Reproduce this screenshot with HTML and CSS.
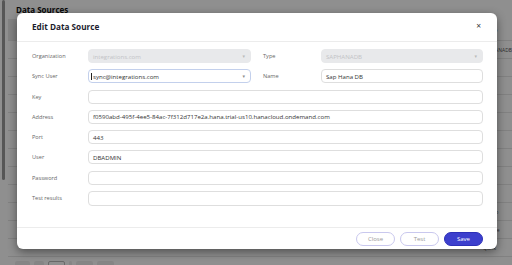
FILE: index.html
```html
<!DOCTYPE html>
<html>
<head>
<meta charset="utf-8">
<link rel="stylesheet" href="styles.css">
</head>
<body>
<div class="page">
  <div class="scrollbar"></div>
  <h1 class="page-title">Data Sources</h1>
  <div class="table">
    <div class="tr th"><span class="c1"></span><span class="c2">Type</span></div>
    <div class="tr"><span class="c1"></span><span class="c2">SAPHANADB</span></div>
    <div class="tr"><span class="c1"></span><span class="c2">ODBC</span></div>
    <div class="tr"><span class="c1"></span><span class="c2">ODBC</span></div>
    <div class="tr"><span class="c1"></span><span class="c2">ODBC</span></div>
    <div class="tr"><span class="c1"></span><span class="c2">ODBC</span></div>
    <div class="tr"><span class="c1"></span><span class="c2">Sage</span></div>
    <div class="tr"><span class="c1"></span><span class="c2">Sage</span></div>
    <div class="tr"><span class="c1"></span><span class="c2">Sage</span></div>
    <div class="tr"><span class="c1"></span><span class="c2">Quick</span></div>
    <div class="tr"><span class="c1"></span><span class="c2">Hubsp</span></div>
    <div class="tr"><span class="c1"></span><span class="c2">Google</span></div>
    <div class="tr"><span class="c1"></span><span class="c2">Quick</span></div>
  </div>
  <div class="pager">
    <span class="pg w15"></span><span class="pg w10"></span><span class="pg w17 bordered"></span><span class="pg w4"></span><span class="pg w17"></span><span class="pg w17"></span>
  </div>
</div>
<div class="overlay"></div>
<div class="modal">
  <div class="modal-header">
    <h2 class="modal-title">Edit Data Source</h2>
    <span class="close-x">×</span>
  </div>
  <div class="modal-body">
    <label class="lbl">Organization</label>
    <div class="inp disabled sel">integrations.com<span class="caret">▾</span></div>
    <label class="lbl lbl-r">Type</label>
    <div class="inp disabled sel">SAPHANADB<span class="caret">▾</span></div>

    <label class="lbl">Sync User</label>
    <div class="inp focus sel"><span class="cursor"></span>sync@integrations.com<span class="caret dark">▾</span></div>
    <label class="lbl lbl-r">Name</label>
    <div class="inp">Sap Hana DB</div>

    <label class="lbl">Key</label>
    <div class="inp full"></div>

    <label class="lbl">Address</label>
    <div class="inp full">f0590abd-495f-4ee5-84ac-7f312d717e2a.hana.trial-us10.hanacloud.ondemand.com</div>

    <label class="lbl">Port</label>
    <div class="inp full">443</div>

    <label class="lbl">User</label>
    <div class="inp full">DBADMIN</div>

    <label class="lbl">Password</label>
    <div class="inp full"></div>

    <label class="lbl">Test results</label>
    <div class="inp full tall"></div>
  </div>
  <div class="modal-footer">
    <button class="btn ghost">Close</button>
    <button class="btn ghost">Test</button>
    <button class="btn primary">Save</button>
  </div>
</div>
</body>
</html>
```
FILE: styles.css
```css
* { box-sizing: border-box; }
html, body { margin: 0; padding: 0; }
body {
  width: 512px;
  height: 265px;
  overflow: hidden;
  background: #fff;
  font-family: "Open Sans", "DejaVu Sans", sans-serif;
  position: relative;
}
.page { position: relative; height: 265px; }
.scrollbar {
  position: absolute; left: 2px; top: 0; width: 3px; height: 180px;
  background: #9a9a9a; border-radius: 2px;
}
.page-title {
  margin: 0;
  padding: 5px 0 0 16px;
  height: 19px;
  font-size: 8px;
  font-weight: 700;
  color: #111;
  line-height: 9px;
}
.table { margin-left: 8px; }
.tr {
  display: flex;
  height: 18px;
  align-items: center;
  border-bottom: 1px solid #e6e6e6;
  font-size: 5px;
  color: #555;
}
.tr.th {
  height: 22px;
  font-weight: 700;
  color: #222;
  font-size: 6px;
}
.tr .c1 { width: 475px; }
.tr.th .c1 { align-self: stretch; width: 9px; background: #e9e9e9; margin-right: 466px; }
.pager {
  display: flex; gap: 4px; margin: 4px 0 0 15px; align-items: flex-start;
}
.pg { height: 10px; background: #eee; border-radius: 2px; }
.pg.bordered { background: #fff; border: 1px solid #bbb; }
.w15 { width: 15px; } .w10 { width: 10px; } .w17 { width: 17px; } .w4 { width: 3px; }

.overlay {
  position: absolute; inset: 0;
  background: rgba(0, 0, 0, 0.44);
}

.modal {
  position: absolute;
  left: 17px; top: 13px;
  width: 480px; height: 236px;
  background: #fff;
  border-radius: 6px;
  box-shadow: 0 3px 10px rgba(0,0,0,0.45);
  display: flex;
  flex-direction: column;
}
.modal-header {
  height: 29px;
  border-bottom: 1px solid #ececec;
  display: flex;
  align-items: center;
  justify-content: space-between;
  padding: 0 16px 1px 15px;
}
.modal-title {
  margin: 0;
  font-size: 8.2px;
  font-weight: 700;
  color: #1c1c2e;
}
.close-x {
  font-size: 8.5px;
  font-weight: 400;
  color: #333;
  line-height: 1;
}
.modal-body {
  display: grid;
  grid-template-columns: 56px 163px 12px 58px 162px;
  grid-auto-rows: 14px;
  row-gap: 6.3px;
  padding: 7px 14px 0 15px;
  height: 185px;
  align-items: center;
}
.lbl {
  font-size: 5.6px;
  color: #666;
  grid-column: 1;
}
.lbl-r { grid-column: 4; }
.inp {
  height: 14px;
  border: 1px solid #dedede;
  border-radius: 4px;
  font-size: 6.1px;
  color: #333;
  display: flex;
  align-items: center;
  padding: 0 4px;
  position: relative;
  white-space: nowrap;
}
.inp.full { grid-column: 2 / 6; }
.inp.tall { height: 15px; }
.inp.disabled {
  background: #e8e9eb;
  border-color: #e8e9eb;
  color: #c2c3c6;
}
.inp.focus { border-color: #c3d0ec; padding-left: 2px; }
.cursor {
  display: inline-block; width: 1px; height: 7px; background: #222; margin-right: 1px;
}
.caret {
  position: absolute; right: 5px; top: 3px;
  font-size: 5px; color: #b9b9b9;
}
.caret.dark { color: #8a8a8a; }
.modal-footer {
  flex: 1;
  border-top: 1px solid #ececec;
  display: flex;
  justify-content: flex-end;
  align-items: center;
  gap: 5px;
  padding: 0 14px 0 0;
}
.btn {
  width: 39px;
  height: 14px;
  border-radius: 7px;
  font-family: inherit;
  font-size: 6px;
  padding: 0;
  cursor: pointer;
}
.btn.ghost {
  background: #fff;
  border: 1px solid #c9c8ee;
  color: #999;
}
.btn.primary {
  background: #3c3fcd;
  border: 1px solid #2d30b8;
  color: #fff;
}
```
